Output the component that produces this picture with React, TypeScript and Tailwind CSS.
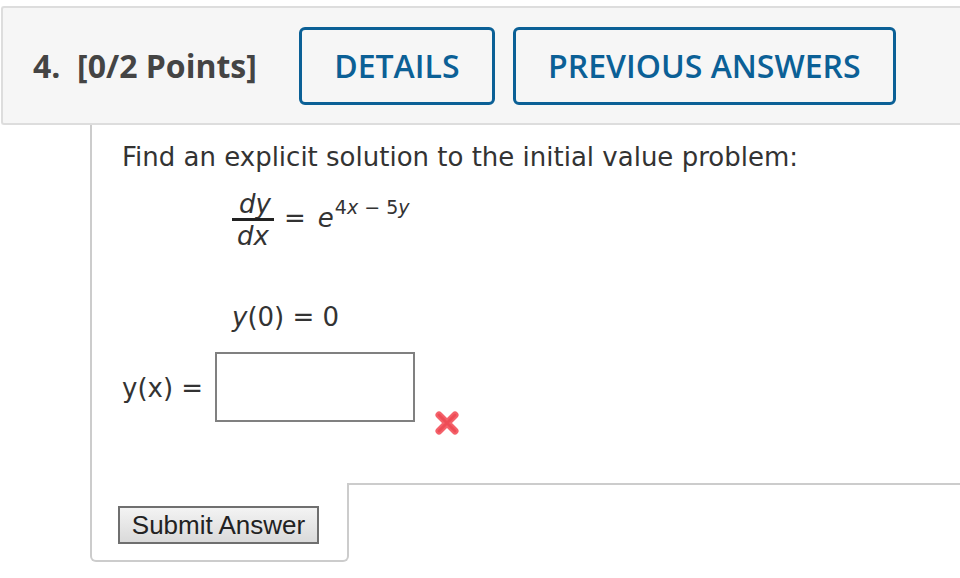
const headerFont = { fontFamily: '"Open Sans", "DejaVu Sans", sans-serif' };
const bodyFont = { fontFamily: '"DejaVu Sans", Verdana, sans-serif' };
const formFont = { fontFamily: '"Liberation Sans", Arial, sans-serif' };

const WrongMark = () => (
  <svg width="30" height="30" viewBox="0 0 30 30" className="blur-[0.5px]">
    <path d="M7 7 L23 23 M23 7 L7 23" stroke="#f4616a" strokeWidth="7" strokeLinecap="round" />
    <path d="M7 7 L23 23 M23 7 L7 23" stroke="#e8343e" strokeWidth="3" strokeLinecap="round" opacity="0.45" />
  </svg>
);

export default function App() {
  return (
    <div className="w-[960px] h-[578px] bg-white overflow-hidden text-[#333]">
      {/* Question header */}
      <div
        className="mt-[6px] ml-[1px] h-[119px] border-2 border-r-0 border-[#dddddd] bg-[#f6f6f6] rounded-l-[3px] flex items-center pl-[30px]"
        style={headerFont}
      >
        <span className="text-[32px] font-bold text-[#444]">
          4.&nbsp; [0/2 Points]
        </span>
        <button className="ml-[42px] w-[196px] h-[78px] border-[3px] border-[#0b6096] rounded-[6px] text-[#0b6096] text-[32px] font-semibold">
          DETAILS
        </button>
        <button className="ml-[18px] w-[383px] h-[78px] border-[3px] border-[#0b6096] rounded-[6px] text-[#0b6096] text-[32px] font-semibold">
          PREVIOUS ANSWERS
        </button>
      </div>

      {/* Question body */}
      <div className="ml-[90px] border-l-2 border-[#cccccc] h-[358px] pl-[30px] pt-[16px]" style={bodyFont}>
        <p className="text-[26px] leading-[32px]">
          Find an explicit solution to the initial value problem:
        </p>

        <div className="ml-[110px] mt-[18px] flex items-center text-[26px]">
          <div className="flex flex-col items-center w-[42px]">
            <span className="italic leading-[27px] pl-[4px]">dy</span>
            <span className="w-full h-[3px] bg-[#222]" />
            <span className="italic leading-[30px]">dx</span>
          </div>
          <div className="flex items-start ml-[10px] mb-[6px]">
            <span className="leading-[30px]">=</span>
            <span className="italic leading-[30px] ml-[12px]">e</span>
            <span className="text-[19px] leading-[19px] -mt-[5px] ml-[1px]">
              4<i>x</i> &minus; 5<i>y</i>
            </span>
          </div>
        </div>

        <p className="ml-[110px] mt-[50px] text-[26px] leading-[32px]">
          <i>y</i>(0) = 0
        </p>

        <div className="mt-[19px] flex items-start">
          <span className="text-[26px] leading-[32px] mt-[20px] w-[93px]">y(x) =</span>
          <div className="w-[200px] h-[70px] border-2 border-[#808080] bg-white" />
          <div className="ml-[17px] mt-[56px]">
            <WrongMark />
          </div>
        </div>
      </div>

      {/* Submit area */}
      <div className="flex">
        <div className="ml-[90px] w-[259px] h-[79px] border-2 border-t-0 border-[#cccccc] rounded-b-[6px] pl-[26px] pt-[23px]">
          <button
            className="w-[201px] h-[38px] border-2 border-[#6f6f6f] bg-gradient-to-b from-[#f3f3f3] to-[#dadada] text-[26px] text-[#222] leading-none"
            style={formFont}
          >
            Submit Answer
          </button>
        </div>
        <div className="flex-1 -ml-[2px] border-t-2 border-[#cccccc] rounded-tl-[3px]" />
      </div>
    </div>
  );
}
